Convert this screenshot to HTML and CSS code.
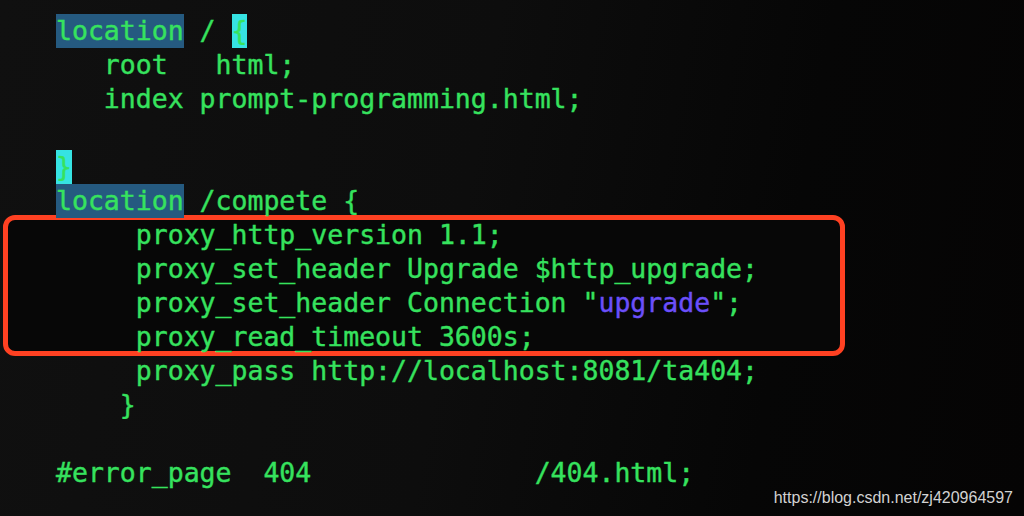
FILE: index.html
```html
<!DOCTYPE html>
<html>
<head>
<meta charset="utf-8">
<link rel="stylesheet" href="styles.css">
</head>
<body>
<div class="screen">
  <div class="code">
    <div class="line"><span class="sel">location</span> / <span class="brace">{</span></div>
    <div class="line">   root   html;</div>
    <div class="line">   index prompt-programming.html;</div>
    <div class="line"> </div>
    <div class="line"><span class="brace">}</span></div>
    <div class="line"><span class="sel">location</span> /compete {</div>
    <div class="line">     proxy_http_version 1.1;</div>
    <div class="line">     proxy_set_header Upgrade $http_upgrade;</div>
    <div class="line">     proxy_set_header Connection "<span class="str">upgrade</span>";</div>
    <div class="line">     proxy_read_timeout 3600s;</div>
    <div class="line">     proxy_pass http://localhost:8081/ta404;</div>
    <div class="line">    }</div>
    <div class="line"> </div>
    <div class="line">#error_page  404              /404.html;</div>
  </div>
  <div class="mark"></div>
  <div class="watermark">https://blog.csdn.net/zj420964597</div>
</div>
</body>
</html>
```
FILE: styles.css
```css
html, body {
  margin: 0;
  padding: 0;
  width: 1024px;
  height: 516px;
  overflow: hidden;
  background: #0c0c0c;
}
.screen {
  position: relative;
  width: 1024px;
  height: 516px;
  background: linear-gradient(100deg, #101010 0%, #0d0d0d 45%, #060606 75%, #050404 100%);
}
.code {
  padding: 14px 0 0 56px;
  font-family: "DejaVu Sans Mono", "Liberation Mono", monospace;
  font-size: 26.5px;
  line-height: 34px;
  color: #36e25e;
  -webkit-text-stroke: 0.4px #36e25e;
  position: relative;
  z-index: 1;
}
.line {
  height: 34px;
  white-space: pre;
}
.sel {
  background: #255a80;
  display: inline-block;
  height: 34px;
}
.brace {
  background: #36e3e3;
  display: inline-block;
  height: 34px;
}
.str {
  color: #6b4ffa;
  -webkit-text-stroke: 0.4px #6b4ffa;
}
.mark {
  position: absolute;
  left: 3px;
  top: 215px;
  width: 832px;
  height: 131px;
  border: 5px solid #ff4122;
  border-radius: 12px;
  background: #070707;
  z-index: 0;
}
.watermark {
  position: absolute;
  right: 11px;
  bottom: 9px;
  font-family: "Liberation Sans", Arial, sans-serif;
  font-size: 16px;
  color: #d2d2d2;
  z-index: 2;
}
```
